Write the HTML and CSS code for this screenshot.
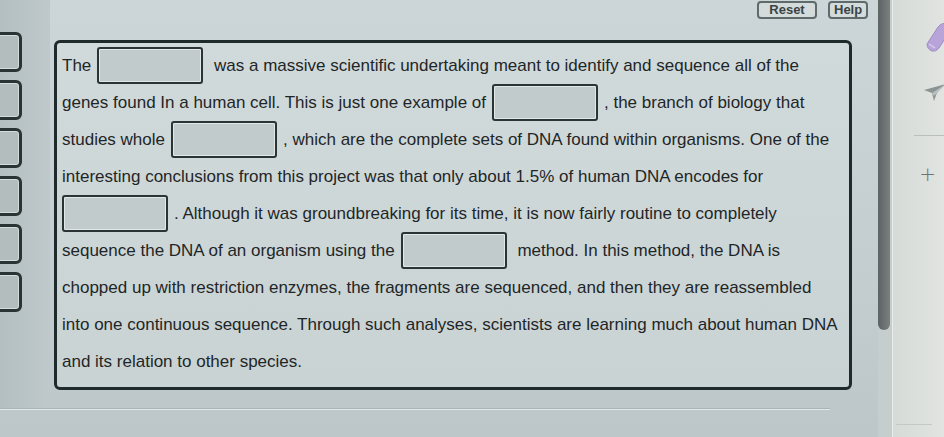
FILE: index.html
```html
<!DOCTYPE html>
<html>
<head>
<meta charset="utf-8">
<link rel="stylesheet" href="styles.css">
</head>
<body>
<div class="screen">
  <div class="left">
    <div class="top-row">
      <div class="rail">
        <div class="tile"></div>
        <div class="tile"></div>
        <div class="tile"></div>
        <div class="tile"></div>
        <div class="tile"></div>
        <div class="tile"></div>
      </div>
      <div class="content">
        <div class="toolbar">
          <button class="btn reset">Reset</button>
          <button class="btn help">Help</button>
        </div>
        <div class="panel">
          <div class="line"><span>The</span><span class="blank"></span><span>&nbsp;was a massive scientific undertaking meant to identify and sequence all of the</span></div>
          <div class="line"><span>genes found In a human cell. This is just one example of</span><span class="blank"></span><span>, the branch of biology that</span></div>
          <div class="line"><span>studies whole</span><span class="blank"></span><span>, which are the complete sets of DNA found within organisms. One of the</span></div>
          <div class="line"><span>interesting conclusions from this project was that only about 1.5% of human DNA encodes for</span></div>
          <div class="line"><span class="blank first"></span><span>. Although it was groundbreaking for its time, it is now fairly routine to completely</span></div>
          <div class="line"><span>sequence the DNA of an organism using the</span><span class="blank"></span><span>&nbsp;method. In this method, the DNA is</span></div>
          <div class="line"><span>chopped up with restriction enzymes, the fragments are sequenced, and then they are reassembled</span></div>
          <div class="line"><span>into one continuous sequence. Through such analyses, scientists are learning much about human DNA</span></div>
          <div class="line"><span>and its relation to other species.</span></div>
        </div>
      </div>
    </div>
    <div class="footer"></div>
  </div>
  <div class="scroll-col">
    <div class="scrollbar"></div>
  </div>
  <div class="side">
    <svg class="icon pencil" width="22" height="30" viewBox="0 0 22 30">
      <path d="M6 29 Q1 27 1 22 L12 5 Q16 0 21 2 L22 3 L22 12 L13 26 Q10 30 6 29 Z" fill="#b8a4d8" stroke="#a08cc4" stroke-width="1"/>
      <path d="M3 22 L9 26" stroke="#d9cdee" stroke-width="1.5"/>
    </svg>
    <svg class="icon plane" width="22" height="18" viewBox="0 0 22 18">
      <path d="M0 6 L22 0 L14 6 L10 17 L8 9 Z" fill="#8b9393"/>
      <path d="M8 9 L22 0 L10 12 Z" fill="#b7bebe"/>
    </svg>
    <div class="divider"></div>
    <div class="plus">+</div>
    <div class="side-foot"></div>
  </div>
</div>
</body>
</html>
```

FILE: styles.css
```css
html, body {
  margin: 0;
  padding: 0;
}
body {
  width: 944px;
  height: 437px;
  overflow: hidden;
  font-family: "Liberation Sans", Arial, sans-serif;
  background: #c5cfd1;
}
.screen {
  display: flex;
  width: 944px;
  height: 437px;
  background: linear-gradient(180deg, #ccd5d7 0%, #c4ced0 60%, #bdc7c9 100%);
}
.left {
  width: 878px;
  display: flex;
  flex-direction: column;
}
.top-row {
  display: flex;
  height: 410px;
}
.rail {
  width: 50px;
  display: flex;
  flex-direction: column;
  gap: 8px;
  padding-top: 32px;
  box-sizing: border-box;
  background: linear-gradient(90deg, #b4bfc2, #bfc9cb);
}
.tile {
  width: 32px;
  height: 40px;
  margin-left: -10px;
  box-sizing: border-box;
  border: 3px solid #2b3434;
  border-radius: 6px;
  background: #b3bdbe;
  box-shadow: inset 0 0 0 1px #d3dada;
}
.content {
  width: 828px;
  display: flex;
  flex-direction: column;
}
.toolbar {
  height: 40px;
  display: flex;
  justify-content: flex-end;
  align-items: flex-start;
  gap: 11px;
  padding-right: 10px;
  padding-top: 1px;
  box-sizing: border-box;
}
.btn {
  height: 18px;
  box-sizing: border-box;
  border: 2px solid #5f6a6a;
  border-radius: 4px;
  background: #d3dbdb;
  color: #3a4444;
  font-family: "Liberation Sans", Arial, sans-serif;
  font-weight: bold;
  font-size: 13px;
  padding: 0 4px;
  line-height: 14px;
  text-align: center;
}
.reset { width: 60px; }
.help { width: 40px; }
.panel {
  margin-left: 4px;
  width: 798px;
  height: 350px;
  box-sizing: border-box;
  border: 3px solid #1f2a2a;
  border-radius: 6px;
  background: linear-gradient(180deg, #d1dadb, #c9d3d4);
  padding: 4px 0 0 5px;
  color: #1f2627;
  font-size: 17px;
}
.line {
  display: flex;
  align-items: center;
  height: 37px;
  white-space: nowrap;
}
.blank {
  display: inline-block;
  width: 106px;
  height: 37px;
  margin: 0 6px;
  box-sizing: border-box;
  border: 2px solid #2b3434;
  border-radius: 3px;
  background: #c2cbcc;
  box-shadow: inset 0 0 0 1px #e2e8e8;
}
.blank.first {
  margin-left: 0;
}
.footer {
  height: 27px;
  border-top: 1px solid #e2e7e7;
  box-shadow: 0 -1px 0 #aab4b6;
  margin-right: 48px;
}
.scroll-col {
  width: 14px;
  background: #c5cdcd;
}
.scrollbar {
  width: 12px;
  height: 330px;
  background: linear-gradient(90deg, #5d6262, #7a7f7f);
  border-radius: 0 0 6px 6px;
}
.side {
  flex: 1;
  display: flex;
  flex-direction: column;
  align-items: flex-end;
  background: linear-gradient(90deg, #d6dbd8, #e1e4e1);
  border-left: 1px solid #e8ecea;
}
.icon { display: block; }
.pencil {
  margin-top: 22px;
  margin-right: -4px;
}
.plane {
  margin-top: 32px;
  margin-right: -2px;
}
.divider {
  margin-top: 33px;
  width: 30px;
  height: 1px;
  background: #b9bfbd;
}
.plus {
  margin-top: 28px;
  margin-right: 8px;
  font-size: 20px;
  font-weight: 300;
  line-height: 20px;
  color: #6e7474;
  font-family: "DejaVu Sans", sans-serif;
}
.side-foot {
  margin-top: auto;
  margin-bottom: 12px;
  width: 36px;
  height: 1px;
  background: #c4c9c7;
  margin-right: 12px;
}
```
